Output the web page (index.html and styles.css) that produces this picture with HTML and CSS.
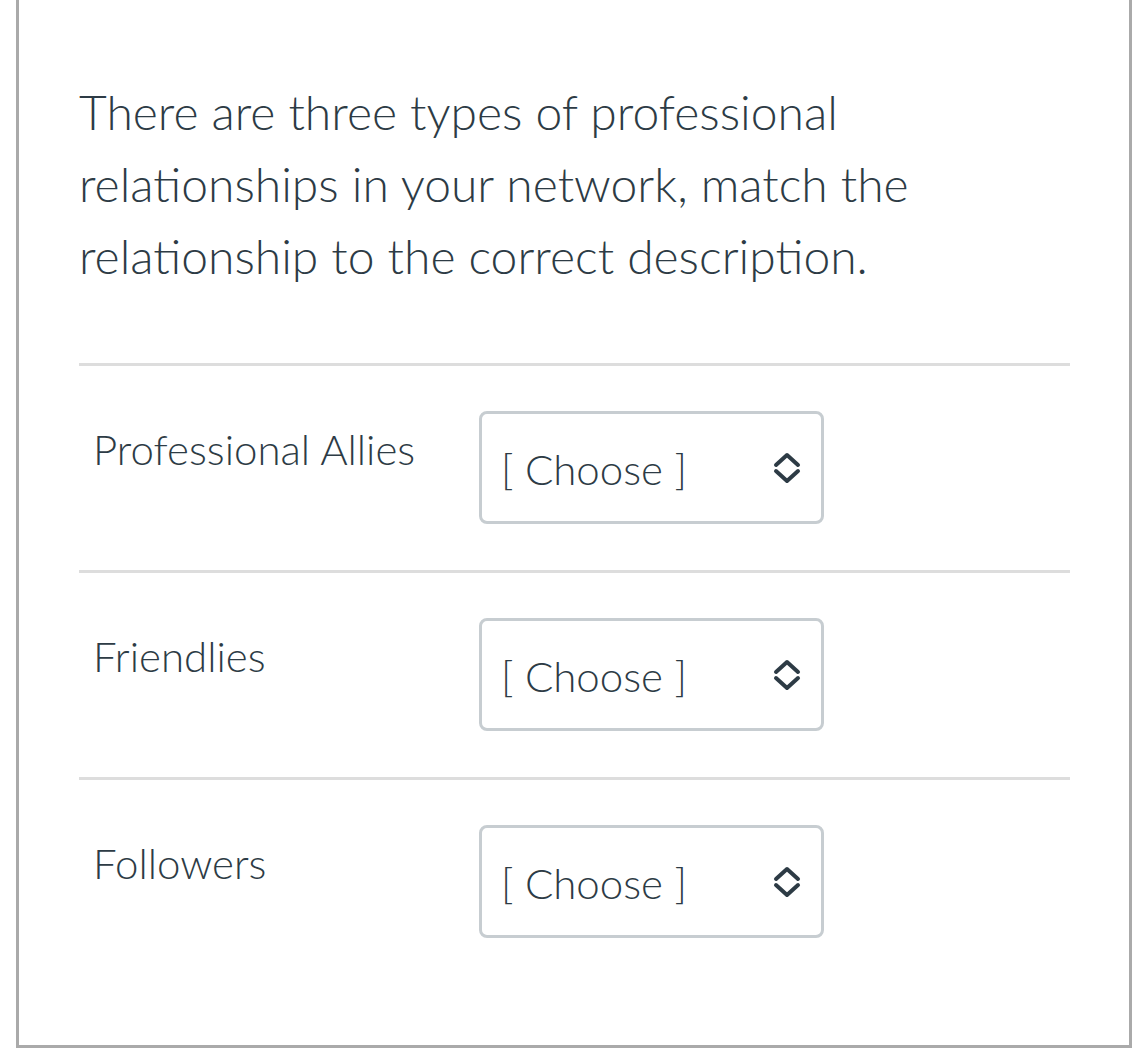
FILE: index.html
```html
<!DOCTYPE html>
<html>
<head>
<meta charset="utf-8">
<link rel="stylesheet" href="styles.css">
</head>
<body>
<div class="card">
  <p class="question">There are three types of professional relationships in your network, match the relationship to the correct description.</p>
  <div class="answers">
    <div class="row">
      <div class="label">Professional Allies</div>
      <div class="select"><span>[ Choose ]</span><svg class="chev" viewBox="0 0 28 32" width="28" height="32"><path d="M3 13 L14 3 L25 13 M3 19 L14 29 L25 19" fill="none" stroke="#2d3b45" stroke-width="4" stroke-linecap="round" stroke-linejoin="round"/></svg></div>
    </div>
    <div class="row">
      <div class="label">Friendlies</div>
      <div class="select"><span>[ Choose ]</span><svg class="chev" viewBox="0 0 28 32" width="28" height="32"><path d="M3 13 L14 3 L25 13 M3 19 L14 29 L25 19" fill="none" stroke="#2d3b45" stroke-width="4" stroke-linecap="round" stroke-linejoin="round"/></svg></div>
    </div>
    <div class="row">
      <div class="label">Followers</div>
      <div class="select"><span>[ Choose ]</span><svg class="chev" viewBox="0 0 28 32" width="28" height="32"><path d="M3 13 L14 3 L25 13 M3 19 L14 29 L25 19" fill="none" stroke="#2d3b45" stroke-width="4" stroke-linecap="round" stroke-linejoin="round"/></svg></div>
    </div>
  </div>
</div>
</body>
</html>
```
FILE: styles.css
```css
html, body {
  margin: 0;
  padding: 0;
  background: #fff;
}
body {
  font-family: Lato, "Open Sans", sans-serif;
  font-weight: 300;
  color: #2d3b45;
}
.card {
  margin-left: 16px;
  width: 1116px;
  height: 1048px;
  box-sizing: border-box;
  border: 3px solid #aaaaaa;
  border-top: 0;
  padding: 76px 59px 0 60px;
}
.question {
  margin: 0;
  font-size: 48px;
  line-height: 72px;
  padding-right: 80px;
}
.answers {
  margin-top: 71px;
}
.row {
  display: flex;
  align-items: flex-start;
  border-top: 3px solid #dddddd;
  height: 204px;
  padding-left: 14px;
}
.label {
  width: 386px;
  font-size: 42px;
  line-height: 44px;
  padding-top: 61px;
}
.select {
  margin-top: 45px;
  width: 345px;
  height: 113px;
  box-sizing: border-box;
  border: 3px solid #c7cdd1;
  border-radius: 8px;
  display: flex;
  align-items: center;
  justify-content: space-between;
  padding: 0 20px 0 19px;
  font-size: 42px;
}
.select span {
  padding-top: 2px;
}
.chev {
  display: block;
}
```
